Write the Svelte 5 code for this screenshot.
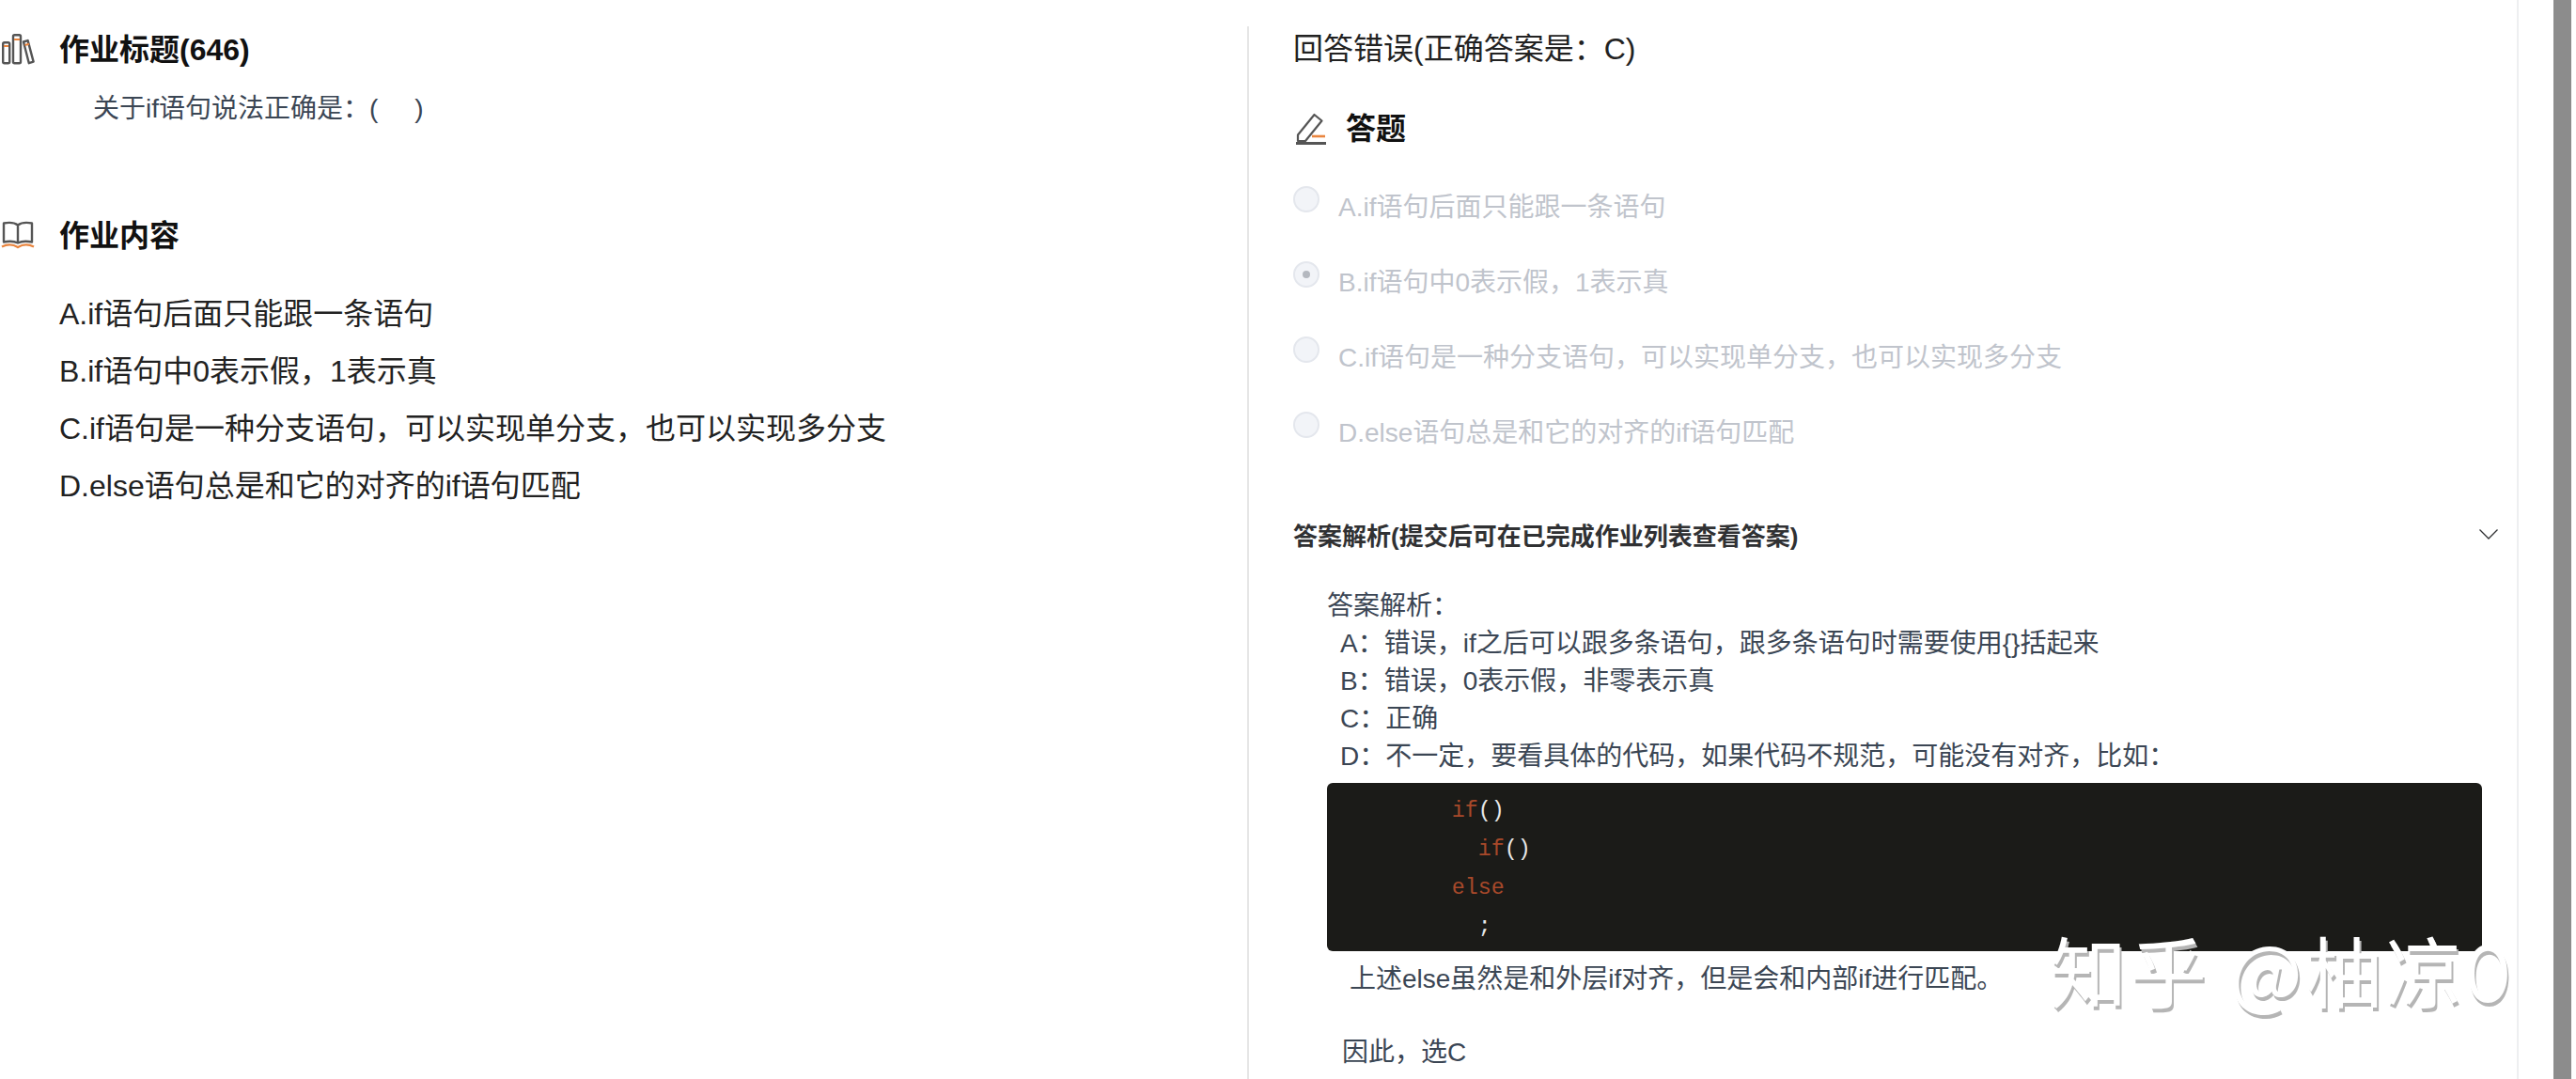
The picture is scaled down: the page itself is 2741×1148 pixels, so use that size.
<script>
  const leftOptions = [
    'A.if语句后面只能跟一条语句',
    'B.if语句中0表示假，1表示真',
    'C.if语句是一种分支语句，可以实现单分支，也可以实现多分支',
    'D.else语句总是和它的对齐的if语句匹配'
  ];
  const radios = leftOptions.map((label, i) => ({ label, checked: i === 1 }));
</script>

<div class="page">
  <div class="main">
    <section class="left">
      <div class="head first">
        <svg class="icon" width="36" height="34" viewBox="0 0 36 34" fill="none">
          <rect x="2.2" y="9.2" width="7" height="22" rx="1.5" stroke="#555" stroke-width="2.4"/>
          <rect x="13" y="1.2" width="8" height="30" rx="1.5" stroke="#555" stroke-width="2.4"/>
          <path d="M24 8.5l4.6-1.4 6 22.5-4.8 1.6z" stroke="#555" stroke-width="2.4" stroke-linejoin="round"/>
          <path d="M3 13h5M14 6h6M25.5 12l4.5-1.300" stroke="#e9853f" stroke-width="2.2"/>
        </svg>
        <h2>作业标题(646)</h2>
      </div>
      <p class="question">关于if语句说法正确是：(&nbsp;&nbsp;&nbsp;&nbsp;&nbsp;)</p>

      <div class="head second">
        <svg class="icon" width="36" height="34" viewBox="0 0 36 34" fill="none">
          <path d="M18 5.500C14 2.500 8 2.500 3 3.500V23.500C8 22.500 14 22.500 18 24.500C22 22.500 28 22.500 33 23.500V3.500C28 2.500 22 2.500 18 5.500ZM18 5.500V24.500" stroke="#555" stroke-width="2.400" stroke-linejoin="round"/>
          <path d="M1 28.500C7 25.500 13 26 18 29C23 26 29 25.500 35 28.500" stroke="#e9853f" stroke-width="2.400"/>
        </svg>
        <h2>作业内容</h2>
      </div>
      <div class="options">
        {#each leftOptions as option}
          <p>{option}</p>
        {/each}
      </div>
    </section>

    <section class="right">
      <p class="result">回答错误(正确答案是：C)</p>
      <div class="head answer">
        <svg class="icon pen" width="34" height="36" viewBox="0 0 34 36" fill="none">
          <path d="M3 24.500L20.500 3l8 6.500L11 31H3z" stroke="#555" stroke-width="2.200" stroke-linejoin="round"/>
          <path d="M18 26h14" stroke="#e9853f" stroke-width="2.600"/>
          <path d="M1 33.500h32" stroke="#555" stroke-width="3"/>
        </svg>
        <h2>答题</h2>
      </div>
      <div class="radios">
        {#each radios as r}
          <div class="radio-row">
            <span class="radio" class:checked={r.checked}></span>
            <span class="radio-label">{r.label}</span>
          </div>
        {/each}
      </div>

      <div class="collapse-head">
        <span>答案解析(提交后可在已完成作业列表查看答案)</span>
        <svg width="20" height="11" viewBox="0 0 20 11" fill="none">
          <path d="M0.500 0.500L10 10L19.500 0.500" stroke="#303133" stroke-width="1.300"/>
        </svg>
      </div>

      <div class="analysis">
        <p>答案解析：</p>
        <p class="in1">A：错误，if之后可以跟多条语句，跟多条语句时需要使用{'{}'}括起来</p>
        <p class="in1">B：错误，0表示假，非零表示真</p>
        <p class="in1">C：正确</p>
        <p class="in1">D：不一定，要看具体的代码，如果代码不规范，可能没有对齐，比如：</p>
        <pre class="code"><code>        <span class="kw">if</span>()
          <span class="kw">if</span>()
        <span class="kw">else</span>
          ;</code></pre>
        <p class="after">上述else虽然是和外层if对齐，但是会和内部if进行匹配。</p>
        <p class="in1 last">因此，选C</p>
      </div>
    </section>
  </div>
  <div class="scrollbar"></div>
  <div class="watermark">知乎 @柚凉<span class="wm-o">O</span></div>
</div>

<style>
  :global(body) { margin: 0; background: #fff; }
  .page {
    position: relative;
    width: 2741px;
    height: 1148px;
    overflow: hidden;
    display: flex;
    background: #fff;
    font-family: "Liberation Sans", "Noto Sans CJK SC", sans-serif;
  }
  p, h2, pre { margin: 0; font-weight: normal; }
  .main {
    width: 2680px;
    height: 1148px;
    display: flex;
    box-sizing: border-box;
    border-right: 2px solid #eeeff1;
  }
  .scrollbar {
    width: 19px;
    height: 1148px;
    margin-left: 37px;
    background: #8c8c8c;
  }
  .left { width: 1327px; flex: none; }
  .head { display: flex; align-items: center; height: 48px; }
  .head h2 { font-size: 32px; font-weight: bold; line-height: 48px; color: #111; }
  .icon { flex: none; }
  .left .head .icon { margin-left: 1px; margin-right: 26px; }
  .head.first { margin-top: 29px; }
  .question { margin: 19px 0 0 99px; font-size: 28px; line-height: 40px; color: #3b4654; }
  .head.second { margin-top: 91px; }
  .options { margin: 29px 0 0 63px; }
  .options p { font-size: 32px; line-height: 61px; color: #222; }
  .right {
    flex: 1;
    margin-top: 28px;
    padding: 0 20px 0 47px;
    border-left: 2px solid #e6e6e6;
  }
  .result { font-size: 32px; line-height: 48px; color: #222; }
  .head.answer { margin-top: 37px; }
  .head.answer .icon { margin: 0 20px 0 2px; }
  .radios { margin-top: 18px; }
  .radio-row { display: flex; align-items: center; height: 80px; }
  .radio {
    box-sizing: border-box;
    width: 28px;
    height: 28px;
    margin: -14px 20px 0 0;
    border: 2px solid #e4e7ed;
    border-radius: 50%;
    background: #f2f4f8;
    display: flex;
    align-items: center;
    justify-content: center;
  }
  .radio.checked::after {
    content: "";
    width: 8px;
    height: 8px;
    border-radius: 50%;
    background: #b4b8bf;
  }
  .radio-label { padding-top: 4px; font-size: 28px; line-height: 40px; color: #c0c4cc; }
  .collapse-head {
    display: flex;
    align-items: center;
    justify-content: space-between;
    height: 60px;
    margin-top: 39px;
    font-size: 26px;
    font-weight: bold;
    color: #303133;
  }
  .analysis { margin-top: 27px; padding: 0 17px 0 36px; }
  .analysis p { font-size: 28px; line-height: 40px; color: #3b4654; }
  .analysis .in1 { padding-left: 14px; }
  .code {
    box-sizing: border-box;
    height: 179px;
    margin-top: 8px;
    padding: 10px 21px 5px;
    border-radius: 6px;
    background: #1b1b18;
    font-family: "Liberation Mono", monospace;
    font-size: 23.3px;
    line-height: 41px;
    color: #e8e8e8;
    white-space: pre;
  }
  .code code { font: inherit; }
  .kw { color: #a8492a; }
  .analysis .after { margin-top: 10px; padding-left: 24px; }
  .analysis .last { margin-top: 38px; padding-left: 16px; }
  .watermark {
    position: absolute;
    left: 2181px;
    top: 976px;
    font-family: "Noto Sans CJK SC", sans-serif;
    font-size: 82px;
    font-weight: 400;
    line-height: 110px;
    letter-spacing: 3px;
    white-space: nowrap;
    color: #fff;
    text-shadow: 2px 4px 0 #b5b5b5;
  }
  .wm-o { display: inline-block; transform: scaleX(0.8); transform-origin: left center; }
</style>
